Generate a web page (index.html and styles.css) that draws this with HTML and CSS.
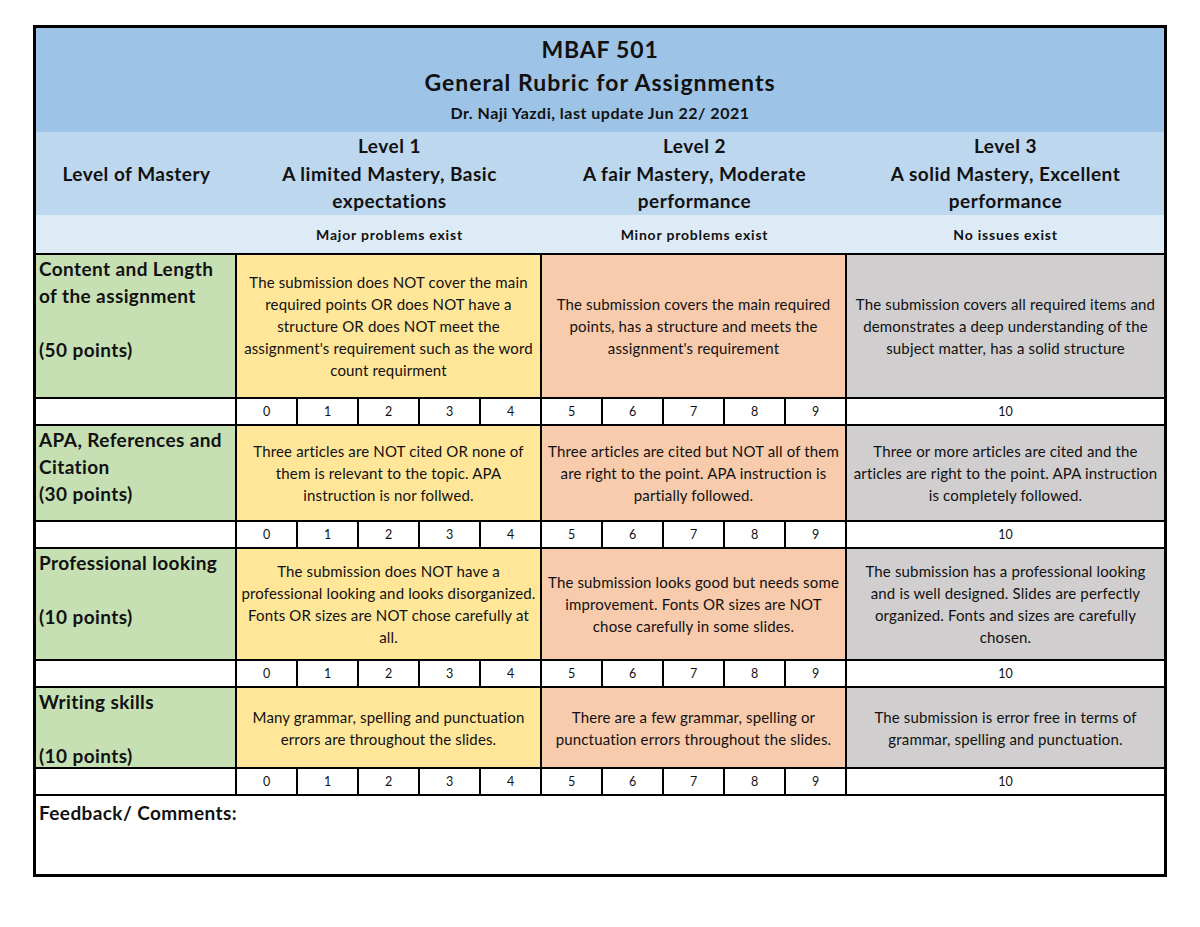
FILE: index.html
```html
<!DOCTYPE html>
<html>
<head>
<meta charset="utf-8">
<link rel="stylesheet" href="styles.css">
</head>
<body>
<div class="sheet">
  <div class="title-band">
    <div class="t1">MBAF 501</div>
    <div class="t2">General Rubric for Assignments</div>
    <div class="t3">Dr. Naji Yazdi, last update Jun 22/ 2021</div>
  </div>
  <div class="level-band">
    <div class="lvl">Level of Mastery</div>
    <div class="lvl">Level 1<br>A limited Mastery, Basic<br>expectations</div>
    <div class="lvl">Level 2<br>A fair Mastery, Moderate<br>performance</div>
    <div class="lvl">Level 3<br>A solid Mastery, Excellent<br>performance</div>
  </div>
  <div class="sub-band">
    <div></div>
    <div class="sub">Major problems exist</div>
    <div class="sub">Minor problems exist</div>
    <div class="sub">No issues exist</div>
  </div>
  <div class="body-grid">
    <!-- Content -->
    <div class="label">Content and Length<br>of the assignment<br><br>(50 points)</div>
    <div class="desc yellow">The submission does NOT cover the main<br>required points OR does NOT have a<br>structure OR does NOT meet the<br>assignment's requirement such as the word<br>count requirment</div>
    <div class="desc orange">The submission covers the main required<br>points, has a structure and meets the<br>assignment's requirement</div>
    <div class="desc gray">The submission covers all required items and<br>demonstrates a deep understanding of the<br>subject matter, has a solid structure</div>
    <div class="blank"></div>
    <div class="score">0</div><div class="score">1</div><div class="score">2</div><div class="score">3</div><div class="score">4</div>
    <div class="score">5</div><div class="score">6</div><div class="score">7</div><div class="score">8</div><div class="score">9</div>
    <div class="score">10</div>

    <!-- APA -->
    <div class="label">APA, References and<br>Citation<br>(30 points)</div>
    <div class="desc yellow">Three articles are NOT cited OR none of<br>them is relevant to the topic. APA<br>instruction is nor follwed.</div>
    <div class="desc orange">Three articles are cited but NOT all of them<br>are right to the point. APA instruction is<br>partially followed.</div>
    <div class="desc gray">Three or more articles are cited and the<br>articles are right to the point. APA instruction<br>is completely followed.</div>
    <div class="blank"></div>
    <div class="score">0</div><div class="score">1</div><div class="score">2</div><div class="score">3</div><div class="score">4</div>
    <div class="score">5</div><div class="score">6</div><div class="score">7</div><div class="score">8</div><div class="score">9</div>
    <div class="score">10</div>

    <!-- Professional -->
    <div class="label">Professional looking<br><br>(10 points)</div>
    <div class="desc yellow">The submission does NOT have a<br>professional looking and looks disorganized.<br>Fonts OR sizes are NOT chose carefully at<br>all.</div>
    <div class="desc orange">The submission looks good but needs some<br>improvement. Fonts OR sizes are NOT<br>chose carefully in some slides.</div>
    <div class="desc gray">The submission has a professional looking<br>and is well designed. Slides are perfectly<br>organized. Fonts and sizes are carefully<br>chosen.</div>
    <div class="blank"></div>
    <div class="score">0</div><div class="score">1</div><div class="score">2</div><div class="score">3</div><div class="score">4</div>
    <div class="score">5</div><div class="score">6</div><div class="score">7</div><div class="score">8</div><div class="score">9</div>
    <div class="score">10</div>

    <!-- Writing -->
    <div class="label">Writing skills<br><br>(10 points)</div>
    <div class="desc yellow">Many grammar, spelling and punctuation<br>errors are throughout the slides.</div>
    <div class="desc orange">There are a few grammar, spelling or<br>punctuation errors throughout the slides.</div>
    <div class="desc gray">The submission is error free in terms of<br>grammar, spelling and punctuation.</div>
    <div class="blank"></div>
    <div class="score">0</div><div class="score">1</div><div class="score">2</div><div class="score">3</div><div class="score">4</div>
    <div class="score">5</div><div class="score">6</div><div class="score">7</div><div class="score">8</div><div class="score">9</div>
    <div class="score">10</div>

    <div class="feedback">Feedback/ Comments:</div>
  </div>
</div>
</body>
</html>
```

FILE: styles.css
```css
* { box-sizing: border-box; }
html, body { margin: 0; padding: 0; background: #fff; }
body {
  font-family: "Lato", "Liberation Sans", sans-serif;
  color: #111;
}
.sheet {
  margin: 25px 0 0 33px;
  width: 1134px;
  border: 3px solid #000;
}
.title-band {
  background: #9dc3e6;
  height: 104px;
  display: flex;
  flex-direction: column;
  align-items: center;
  padding-top: 6px;
  font-weight: 700;
}
.t1 { font-size: 23px; line-height: 30px; letter-spacing: 0.8px; }
.t2 { font-size: 23px; line-height: 36px; letter-spacing: 1px; }
.t3 { font-size: 16px; line-height: 25px; letter-spacing: 0.5px; }

.level-band, .sub-band {
  display: grid;
  grid-template-columns: 201px 305px 305px 317px;
}
.level-band {
  background: #bdd7ee;
  height: 83px;
}
.lvl {
  display: flex;
  align-items: center;
  justify-content: center;
  text-align: center;
  font-weight: 700;
  font-size: 19px;
  line-height: 27.5px;
  letter-spacing: 0.5px;
  white-space: nowrap;
}
.sub-band {
  background: #ddebf7;
  height: 38px;
}
.sub {
  display: flex;
  align-items: center;
  justify-content: center;
  font-weight: 700;
  font-size: 14px;
  letter-spacing: 0.8px;
}
.body-grid {
  display: grid;
  grid-template-columns: 199px repeat(10, 59px) 317px;
  grid-template-rows: 142px 25px 94px 25px 110px 25px 79px 25px 78px;
  gap: 2px;
  background: #000;
  border-top: 2px solid #000;
}
.label {
  background: #c6e0b4;
  font-weight: 700;
  font-size: 19px;
  line-height: 27px;
  letter-spacing: 0.4px;
  padding: 0 3px;
  white-space: nowrap;
}
.desc {
  grid-column: span 5;
  display: flex;
  align-items: center;
  justify-content: center;
  text-align: center;
  font-size: 15px;
  line-height: 22px;
  white-space: nowrap;
  letter-spacing: 0.15px;
}
.desc.gray { grid-column: span 1; }
.yellow { background: #ffe699; }
.orange { background: #f8cbad; }
.gray { background: #d0cece; }
.blank { background: #fff; }
.score {
  background: #fff;
  display: flex;
  align-items: center;
  justify-content: center;
  font-size: 12.5px;
}
.feedback {
  grid-column: 1 / -1;
  background: #fff;
  font-weight: 700;
  font-size: 19px;
  line-height: 27px;
  letter-spacing: 0.4px;
  padding: 3px 3px;
}
```
